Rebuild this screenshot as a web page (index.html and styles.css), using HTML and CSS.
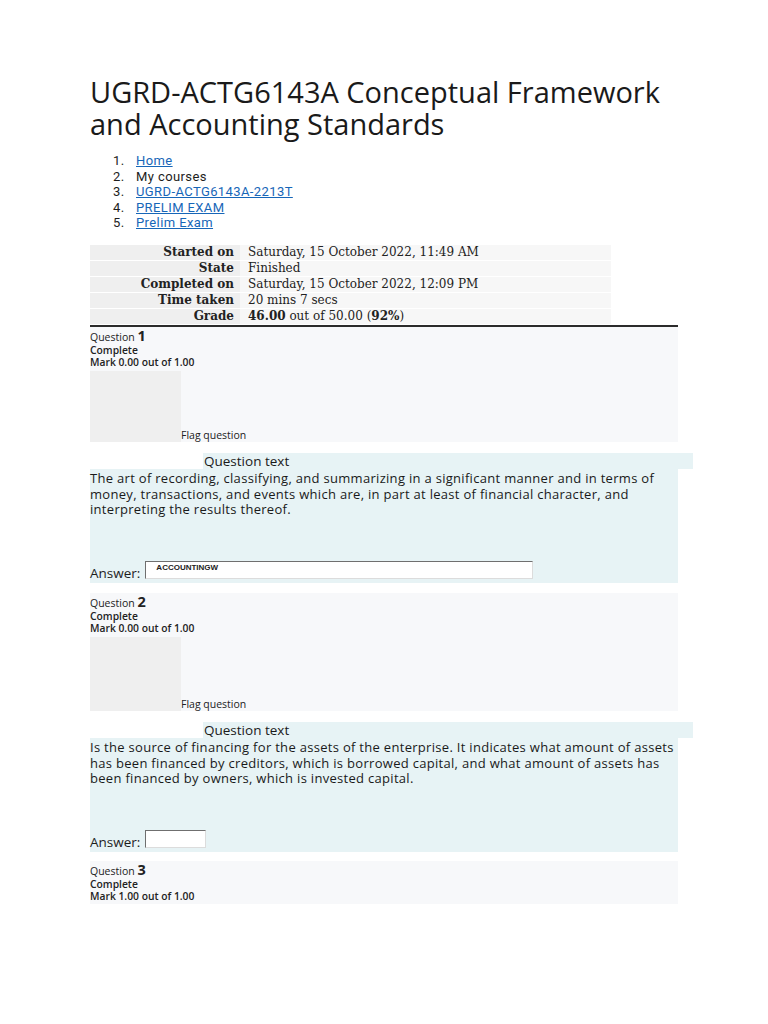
FILE: index.html
```html
<!DOCTYPE html>
<html>
<head>
<meta charset="utf-8">
<title>Prelim Exam</title>
<link rel="stylesheet" href="styles.css">
</head>
<body>
<div class="page">
  <h1 class="title">UGRD-ACTG6143A Conceptual Framework and Accounting Standards</h1>
  <ol class="crumbs">
    <li><a href="#">Home</a></li>
    <li>My courses</li>
    <li><a href="#">UGRD-ACTG6143A-2213T</a></li>
    <li><a href="#">PRELIM EXAM</a></li>
    <li><a href="#">Prelim Exam</a></li>
  </ol>

  <table class="summary">
    <tr><th>Started on</th><td>Saturday, 15 October 2022, 11:49 AM</td></tr>
    <tr><th>State</th><td>Finished</td></tr>
    <tr><th>Completed on</th><td>Saturday, 15 October 2022, 12:09 PM</td></tr>
    <tr><th>Time taken</th><td>20 mins 7 secs</td></tr>
    <tr><th>Grade</th><td><b>46.00</b> out of 50.00 (<b>92%</b>)</td></tr>
  </table>
  <div class="rule"></div>

  <div class="que-info">
    <div class="qno">Question <b>1</b></div>
    <div class="qstate">Complete</div>
    <div class="qgrade">Mark 0.00 out of 1.00</div>
    <div class="flag-row"><div class="flag-pic"></div><span class="flag">Flag question</span></div>
  </div>
  <div class="qtext-head">Question text</div>
  <div class="qcontent">
    <p class="qtext">The art of recording, classifying, and summarizing in a significant manner and in terms of money, transactions, and events which are, in part at least of financial character, and interpreting the results thereof.</p>
    <div class="answer"><span class="answer-label">Answer:</span><span class="input input-wide">ACCOUNTINGW</span></div>
  </div>

  <div class="que-info q2">
    <div class="qno">Question <b>2</b></div>
    <div class="qstate">Complete</div>
    <div class="qgrade">Mark 0.00 out of 1.00</div>
    <div class="flag-row"><div class="flag-pic"></div><span class="flag">Flag question</span></div>
  </div>
  <div class="qtext-head">Question text</div>
  <div class="qcontent">
    <p class="qtext">Is the source of financing for the assets of the enterprise. It indicates what amount of assets has been financed by creditors, which is borrowed capital, and what amount of assets has been financed by owners, which is invested capital.</p>
    <div class="answer"><span class="answer-label">Answer:</span><span class="input input-short"></span></div>
  </div>

  <div class="que-info q3">
    <div class="qno">Question <b>3</b></div>
    <div class="qstate">Complete</div>
    <div class="qgrade">Mark 1.00 out of 1.00</div>
  </div>
</div>
</body>
</html>
```

FILE: styles.css
```css
html, body {
  margin: 0;
  padding: 0;
  background: #ffffff;
}

.page {
  width: 588px;
  padding: 76px 0 0 90px;
  font-family: "Open Sans", "Noto Sans", sans-serif;
  color: #1d1d1d;
}

.title {
  margin: 0;
  font-weight: 400;
  font-size: 29px;
  line-height: 32px;
  color: #1a1a1a;
}

.crumbs {
  margin: 13px 0 0 0;
  padding-left: 0;
  list-style: none;
  counter-reset: crumb;
  font-family: Roboto, "Open Sans", sans-serif;
  font-size: 13px;
  letter-spacing: 0.4px;
  line-height: 15.5px;
  color: #1d1d1d;
}

.crumbs li {
  counter-increment: crumb;
  display: flex;
}

.crumbs li::before {
  content: counter(crumb) ".";
  width: 46px;
  padding-left: 23px;
  box-sizing: border-box;
  flex: none;
}

.crumbs a {
  color: #1766b8;
  text-decoration: underline;
}

.summary {
  margin-top: 14px;
  width: 521px;
  border-collapse: collapse;
  font-family: "DejaVu Serif", "Liberation Serif", serif;
  font-size: 12px;
  color: #222;
}

.summary tr {
  height: 16px;
  border-bottom: 1px solid #ffffff;
}

.summary th {
  width: 144px;
  text-align: right;
  padding: 0 6px 0 0;
  background: #efefef;
  font-weight: 700;
  line-height: 15px;
}

.summary td {
  padding: 0 0 0 8px;
  background: #f7f7f7;
  line-height: 15px;
}

.rule {
  height: 2px;
  background: #2b2b2b;
  width: 588px;
}

.que-info {
  background: #f7f8fa;
  height: 115px;
  font-size: 10.3px;
  line-height: 12.5px;
  color: #222;
  display: flex;
  flex-direction: column;
  padding-top: 3px;
  box-sizing: border-box;
}

.que-info.q2 {
  height: 118px;
}

.que-info.q3 {
  height: 43px;
}

.qno {
  font-weight: 400;
  font-size: 10.5px;
}

.qno b {
  font-size: 14.5px;
  font-weight: 700;
}

.qstate, .qgrade {
  font-weight: 600;
}

.flag-row {
  display: flex;
  align-items: flex-end;
  flex: 1;
  margin-top: 2px;
}

.flag-pic {
  width: 91px;
  align-self: stretch;
  background: #efefef;
}

.flag {
  font-size: 10.5px;
  font-weight: 500;
  line-height: 12px;
  padding-bottom: 1px;
}

.qtext-head {
  margin: 11px 0 0 113px;
  width: 489px;
  background: #e7f3f5;
  font-size: 13.5px;
  line-height: 16px;
  padding-left: 1px;
  color: #1a1a1a;
}

.qcontent {
  background: #e7f3f5;
  width: 588px;
  height: 114px;
  display: flex;
  flex-direction: column;
  box-sizing: border-box;
}

.qcontent + .que-info {
  margin-top: 10px;
}

.qcontent + .que-info.q3 {
  margin-top: 9px;
}

.qtext {
  margin: 2px 0 0 0;
  font-size: 13px;
  letter-spacing: 0.3px;
  line-height: 15.5px;
  color: #1a1a1a;
  font-weight: 500;
}

.answer {
  margin-top: auto;
  display: flex;
  align-items: flex-end;
  padding-bottom: 2px;
}

.answer-label {
  font-size: 13.5px;
  line-height: 15px;
  margin-right: 5px;
}

.input {
  display: block;
  background: #ffffff;
  border-top: 1px solid #6f6f6f;
  border-left: 1px solid #6f6f6f;
  border-right: 1px solid #dcdcdc;
  border-bottom: 1px solid #dcdcdc;
  box-sizing: border-box;
  margin-bottom: 2px;
  font-family: "Liberation Sans", Arial, sans-serif;
  font-size: 8px;
  font-weight: 700;
  line-height: 10px;
  color: #222;
}

.input-wide {
  width: 388px;
  height: 18px;
  padding: 1px 0 0 10px;
}

.input-short {
  width: 61px;
  height: 18px;
}
```
